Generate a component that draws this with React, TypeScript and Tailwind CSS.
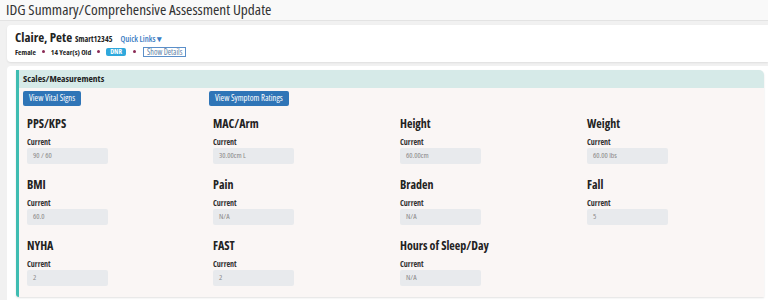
const items = [
  { label: 'PPS/KPS', value: '90 / 60' },
  { label: 'MAC/Arm', value: '30.00cm L' },
  { label: 'Height', value: '60.00cm' },
  { label: 'Weight', value: '60.00 lbs' },
  { label: 'BMI', value: '60.0' },
  { label: 'Pain', value: 'N/A' },
  { label: 'Braden', value: 'N/A' },
  { label: 'Fall', value: '5' },
  { label: 'NYHA', value: '2' },
  { label: 'FAST', value: '2' },
  { label: 'Hours of Sleep/Day', value: 'N/A' },
]

function Dot() {
  return <span className="mx-[6px] inline-block h-[3px] w-[3px] rounded-full bg-[#8a2a55]" />
}

export default function App() {
  return (
    <div className="h-[300px] w-[768px] overflow-hidden bg-[#f1f1f1] font-['Open_Sans',sans-serif] font-stretch-[75%] text-[#222]">
      <div className="flex h-[21px] items-center border-b border-[#e3e3e3] bg-[#f9f9f9] pl-[6px] text-[15.3px] leading-none text-[#333]">
        IDG Summary/Comprehensive Assessment Update
      </div>

      <div className="ml-[7px] mt-[4px] h-[37px] rounded-l-[4px] bg-white pl-[8px] pt-[4px] shadow-[0_1px_2px_rgba(0,0,0,0.08)]">
        <div className="flex items-baseline">
          <span className="text-[13px] font-bold leading-[16px]">Claire, Pete</span>
          <span className="ml-[3px] text-[8px] font-bold">Smart12345</span>
          <span className="ml-[8px] text-[8.5px] font-semibold text-[#3b7dc4]">Quick Links ▾</span>
        </div>
        <div className="mt-[1px] flex items-center text-[7.5px] font-bold leading-[10px]">
          <span>Female</span>
          <Dot />
          <span>14 Year(s) Old</span>
          <Dot />
          <span className="rounded-[2px] bg-[#2fa8dc] px-[4px] text-[7px] leading-[8px] text-white">DNR</span>
          <span className="mx-[7px] inline-block h-[3px] w-[3px] rounded-full bg-[#8a2a55]" />
          <span className="border border-[#5b8fc9] px-[3px] text-[8px] font-normal leading-[8px] text-[#5d7fa6]">
            Show Details
          </span>
        </div>
      </div>

      <div className="ml-[7px] mt-[4px] h-[240px] rounded-l-[4px] bg-white pl-[9px] pr-[4px] pt-[4px]">
        <div className="overflow-hidden rounded-tr-[5px] rounded-bl-[3px] border-l-[3px] border-[#3fbdb2] bg-[#faf6f5] shadow-[0_1px_2px_rgba(0,0,0,0.12)]">
          <div className="flex h-[18px] items-center bg-[#d6eae8] pl-[4px] text-[9.5px] font-bold">
            Scales/Measurements
          </div>
          <div className="pb-[11px] pl-[4px] pt-[3px]">
            <div className="grid grid-cols-[186px_187px_187px_1fr]">
              <div className="flex">
                <button className="h-[15px] rounded-[2px] bg-[#2f75b7] px-[6px] text-[8.7px] leading-none text-white">
                  View Vital Signs
                </button>
              </div>
              <div className="flex">
                <button className="h-[15px] rounded-[2px] bg-[#2f75b7] px-[6px] text-[8.7px] leading-none text-white">
                  View Symptom Ratings
                </button>
              </div>
            </div>
            <div className="mt-[10px] grid grid-cols-[186px_187px_187px_1fr] gap-y-[13px]">
              {items.map((it) => (
                <div key={it.label} className="pl-[4px]">
                  <div className="text-[12px] font-bold leading-[16px] text-[#222]">{it.label}</div>
                  <div className="mt-[5px] text-[8px] font-bold leading-[10px] text-[#333]">Current</div>
                  <div className="mt-[1px] flex h-[16px] w-[81px] items-center rounded-[2px] bg-[#e8eaed] pl-[6px] text-[7.7px] text-[#888]">
                    {it.value}
                  </div>
                </div>
              ))}
            </div>
          </div>
        </div>
      </div>
    </div>
  )
}
